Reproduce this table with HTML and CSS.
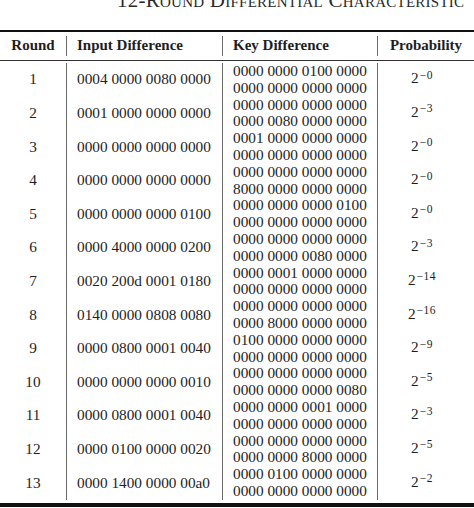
FILE: index.html
```html
<!DOCTYPE html>
<html>
<head>
<meta charset="utf-8">
<link rel="stylesheet" href="styles.css">
</head>
<body>
<div class="page">
  <div class="title">12-Round Differential Characteristic</div>
  <div class="tbl">
    <div class="toprule"></div>
    <div class="head">
      <div class="hc c1">Round</div>
      <div class="hc c2">Input Difference</div>
      <div class="hc c3">Key Difference</div>
      <div class="hc c4">Probability</div>
    </div>
    <div class="midrule"></div>
    <div class="body">
      <div class="row"><div class="c1">1</div><div class="c2">0004 0000 0080 0000</div><div class="c3">0000 0000 0100 0000<br>0000 0000 0000 0000</div><div class="c4">2<sup>−0</sup></div></div>
      <div class="row"><div class="c1">2</div><div class="c2">0001 0000 0000 0000</div><div class="c3">0000 0000 0000 0000<br>0000 0080 0000 0000</div><div class="c4">2<sup>−3</sup></div></div>
      <div class="row"><div class="c1">3</div><div class="c2">0000 0000 0000 0000</div><div class="c3">0001 0000 0000 0000<br>0000 0000 0000 0000</div><div class="c4">2<sup>−0</sup></div></div>
      <div class="row"><div class="c1">4</div><div class="c2">0000 0000 0000 0000</div><div class="c3">0000 0000 0000 0000<br>8000 0000 0000 0000</div><div class="c4">2<sup>−0</sup></div></div>
      <div class="row"><div class="c1">5</div><div class="c2">0000 0000 0000 0100</div><div class="c3">0000 0000 0000 0100<br>0000 0000 0000 0000</div><div class="c4">2<sup>−0</sup></div></div>
      <div class="row"><div class="c1">6</div><div class="c2">0000 4000 0000 0200</div><div class="c3">0000 0000 0000 0000<br>0000 0000 0080 0000</div><div class="c4">2<sup>−3</sup></div></div>
      <div class="row"><div class="c1">7</div><div class="c2">0020 200d 0001 0180</div><div class="c3">0000 0001 0000 0000<br>0000 0000 0000 0000</div><div class="c4">2<sup>−14</sup></div></div>
      <div class="row"><div class="c1">8</div><div class="c2">0140 0000 0808 0080</div><div class="c3">0000 0000 0000 0000<br>0000 8000 0000 0000</div><div class="c4">2<sup>−16</sup></div></div>
      <div class="row"><div class="c1">9</div><div class="c2">0000 0800 0001 0040</div><div class="c3">0100 0000 0000 0000<br>0000 0000 0000 0000</div><div class="c4">2<sup>−9</sup></div></div>
      <div class="row"><div class="c1">10</div><div class="c2">0000 0000 0000 0010</div><div class="c3">0000 0000 0000 0000<br>0000 0000 0000 0080</div><div class="c4">2<sup>−5</sup></div></div>
      <div class="row"><div class="c1">11</div><div class="c2">0000 0800 0001 0040</div><div class="c3">0000 0000 0001 0000<br>0000 0000 0000 0000</div><div class="c4">2<sup>−3</sup></div></div>
      <div class="row"><div class="c1">12</div><div class="c2">0000 0100 0000 0020</div><div class="c3">0000 0000 0000 0000<br>0000 0000 8000 0000</div><div class="c4">2<sup>−5</sup></div></div>
      <div class="row"><div class="c1">13</div><div class="c2">0000 1400 0000 00a0</div><div class="c3">0000 0100 0000 0000<br>0000 0000 0000 0000</div><div class="c4">2<sup>−2</sup></div></div>
    </div>
    <div class="bottomrule"></div>
  </div>
</div>
</body>
</html>
```

FILE: styles.css
```css
html, body {
  margin: 0;
  padding: 0;
  background: #fff;
}
.page {
  width: 474px;
  height: 508px;
  overflow: hidden;
  font-family: "Liberation Serif", "Times New Roman", serif;
  color: #1e1e1e;
}
.title {
  font-size: 21px;
  font-variant: small-caps;
  line-height: 1;
  margin-top: -10px;
  height: 40px;
  padding-left: 117px;
  letter-spacing: 0.25px;
  box-sizing: border-box;
  white-space: nowrap;
  color: #2a2a2a;
}
.toprule {
  height: 1.5px;
  background: #111;
}
.head {
  display: grid;
  grid-template-columns: 66px 156px 155px 97px;
  height: 28px;
  font-weight: bold;
  font-size: 15px;
}
.hc {
  display: flex;
  align-items: center;
  margin: 4px 0 4px;
}
.head .c2, .head .c3, .head .c4 {
  border-left: 1.5px solid #6a6a6a;
}
.c1 { justify-content: center; text-align: center; }
.c2, .c3 { padding-left: 10px; }
.c4 { justify-content: center; text-align: center; }
.midrule {
  height: 1px;
  background: #333;
}
.body {
  padding: 2.5px 0 3px;
  font-size: 15.3px;
}
.row {
  display: grid;
  grid-template-columns: 66px 156px 155px 97px;
  height: 33.6px;
  line-height: 16.8px;
}
.row > div {
  display: flex;
  align-items: center;
}
.row .c2, .row .c3, .row .c4 {
  border-left: 1.5px solid #6a6a6a;
}
.row .c3 {
  display: block;
}
.row .c4 {
  padding-right: 8px;
  padding-bottom: 2px;
}
sup {
  font-size: 11.5px;
  line-height: 0;
  position: relative;
  top: -4px;
  margin-left: 1px;
  letter-spacing: 0.5px;
}
.bottomrule {
  height: 4px;
  background: #111;
}
```
